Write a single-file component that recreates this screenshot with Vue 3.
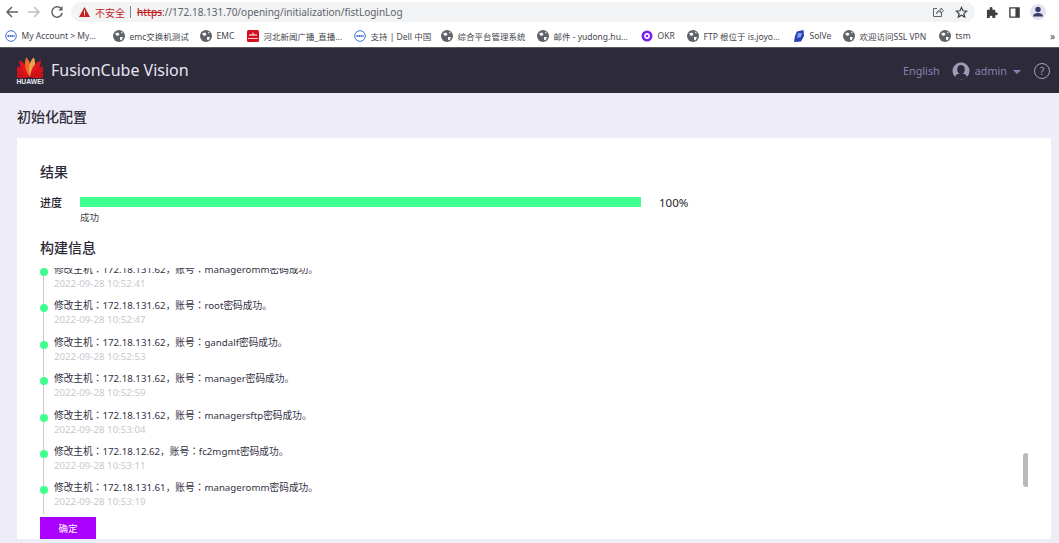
<script setup>
const bookmarks = [
  { icon: 'dell', text: 'My Account > My...', w: 108 },
  { icon: 'globe', text: 'emc交换机测试', w: 87 },
  { icon: 'globe', text: 'EMC', w: 47 },
  { icon: 'red', text: '河北新闻广播_直播...', w: 107 },
  { icon: 'dell', text: '支持 | Dell 中国', w: 87 },
  { icon: 'globe', text: '综合平台管理系统', w: 96 },
  { icon: 'globe', text: '邮件 - yudong.hu...', w: 104 },
  { icon: 'okr', text: 'OKR', w: 46 },
  { icon: 'globe', text: 'FTP 根位于 is.joyo...', w: 106 },
  { icon: 'solve', text: 'SolVe', w: 50 },
  { icon: 'globe', text: '欢迎访问SSL VPN', w: 96 },
  { icon: 'globe', text: 'tsm', w: 40 }
]
const logs = [
  { text: '修改主机：172.18.131.62，账号：manageromm密码成功。', time: '2022-09-28 10:52:41' },
  { text: '修改主机：172.18.131.62，账号：root密码成功。', time: '2022-09-28 10:52:47' },
  { text: '修改主机：172.18.131.62，账号：gandalf密码成功。', time: '2022-09-28 10:52:53' },
  { text: '修改主机：172.18.131.62，账号：manager密码成功。', time: '2022-09-28 10:52:59' },
  { text: '修改主机：172.18.131.62，账号：managersftp密码成功。', time: '2022-09-28 10:53:04' },
  { text: '修改主机：172.18.12.62，账号：fc2mgmt密码成功。', time: '2022-09-28 10:53:11' },
  { text: '修改主机：172.18.131.61，账号：manageromm密码成功。', time: '2022-09-28 10:53:19' }
]
const petals = [
  { a: -80, c: '#c90f18' }, { a: -56, c: '#d5121c' }, { a: -33, c: '#e0161f' }, { a: -11, c: '#ee6a2a' },
  { a: 11, c: '#f0a24a' }, { a: 33, c: '#e0161f' }, { a: 56, c: '#d5121c' }, { a: 80, c: '#c90f18' }
]
</script>

<template>
  <div class="page">
    <div class="toolbar">
      <svg class="nav" width="14" height="14" viewBox="0 0 14 14"><path d="M13 7H2M7 2 2 7l5 5" fill="none" stroke="#5f6368" stroke-width="1.5"/></svg>
      <svg class="nav" width="14" height="14" viewBox="0 0 14 14"><path d="M1 7h11M7 2l5 5-5 5" fill="none" stroke="#bdc1c6" stroke-width="1.5"/></svg>
      <svg class="nav" width="14" height="14" viewBox="0 0 14 14"><path d="M11.5 4.2A5.2 5.2 0 1 0 12.2 8" fill="none" stroke="#5f6368" stroke-width="1.5"/><path d="M12.6 1v4.4H8.2z" fill="#5f6368"/></svg>
      <div class="omnibox">
        <svg width="11" height="10" viewBox="0 0 11 10"><path d="M5.5 0 11 10H0z" fill="#c5221f"/><path d="M5 3.5h1v3.4H5zM5 7.6h1v1H5z" fill="#fff"/></svg>
        <span class="insecure">不安全</span>
        <span class="sep"></span>
        <span class="url"><span class="scheme">https</span>://172.18.131.70/opening/initialization/fistLoginLog</span>
        <span class="omni-right">
          <svg width="12" height="12" viewBox="0 0 12 12"><path d="M5 2.5H1.5v8h8V7M4.5 7.5C5 5 7 3.800 9 3.800V2l2.500 2.700L9 7.200V5.500c-2 0-3.500.7-4.500 2z" fill="none" stroke="#5f6368"/></svg>
          <svg width="13" height="13" viewBox="0 0 13 13"><path d="m6.500 1.500 1.500 3.300 3.600.4-2.700 2.400.8 3.500-3.200-1.800-3.200 1.800.8-3.500-2.700-2.400 3.600-.4z" fill="none" stroke="#3c4043" stroke-width="1.200"/></svg>
        </span>
      </div>
      <div class="tools">
        <svg width="12" height="12" viewBox="0 0 13 13"><path d="M1 4h3V2.500a1.500 1.500 0 0 1 3 0V4h3v3h1.300a1.500 1.500 0 0 1 0 3H10v3H7v-1a1.500 1.500 0 0 0-3 0v1H1z" fill="#3c4043"/></svg>
        <svg width="11" height="11" viewBox="0 0 12 12"><path d="M1 1h10v10H1z" fill="none" stroke="#3c4043" stroke-width="1.500"/><path d="M7 1h4v10H7z" fill="#3c4043"/></svg>
        <span class="avatar"><svg width="16" height="16" viewBox="0 0 16 16"><circle cx="8" cy="5.500" r="2.700" fill="#3b3a6b"/><path d="M3 12.500c0-2.500 2.500-3.500 5-3.500s5 1 5 3.500z" fill="#3b3a6b"/></svg></span>
        <svg width="3" height="12" viewBox="0 0 3 12"><circle cx="1.500" cy="2" r="1.200" fill="#3c4043"/><circle cx="1.500" cy="6" r="1.200" fill="#3c4043"/><circle cx="1.500" cy="10" r="1.200" fill="#3c4043"/></svg>
      </div>
    </div>

    <div class="bookmarks">
      <span v-for="b in bookmarks" :key="b.text" class="bookmark" :style="{ width: b.w + 'px' }">
        <svg v-if="b.icon === 'globe'" width="12" height="12" viewBox="0 0 12 12"><circle cx="6" cy="6" r="6" fill="#5f6368"/><path d="M2 3.500 5 2.500l1.500 1.500-1 1.500-1.500.5zM7 7h3L8.500 10.500 7 9.500zM8 1.500 10 3 8.500 3.500z" fill="#fff"/></svg>
        <svg v-else-if="b.icon === 'dell'" width="12" height="12" viewBox="0 0 12 12"><circle cx="6" cy="6" r="5.300" fill="#fff" stroke="#3f6fd0"/><path d="M2.500 6h7" stroke="#3f6fd0" stroke-width="1.800" stroke-dasharray="1.500 .5"/></svg>
        <svg v-else-if="b.icon === 'red'" width="12" height="12" viewBox="0 0 12 12"><rect width="12" height="12" rx="1.500" fill="#d40f1e"/><path d="M2 4.500h8v1H2zM5.500 2.500h1v3h-1z" fill="#fff"/><path d="M1 8h10v1H1z" fill="#ffd0d0"/></svg>
        <svg v-else-if="b.icon === 'okr'" width="12" height="12" viewBox="0 0 12 12"><circle cx="6" cy="6" r="4.200" fill="#fff" stroke="#7b22e8" stroke-width="2.600"/><circle cx="6" cy="6" r="1.300" fill="#7b22e8"/></svg>
        <svg v-else width="12" height="12" viewBox="0 0 12 12"><path d="M4 1.500 10.500 0 11 6 8 11.500 1 12l1-6z" fill="#2b3fb0"/><path d="M5 3 9 3 8 7 4 8z" fill="#7fa0e8"/></svg>
        <span>{{ b.text }}</span>
      </span>
      <span class="more">»</span>
    </div>

    <header class="app-header">
      <div class="logo">
        <svg width="26" height="22" viewBox="0 0 26 22">
          <path v-for="p in petals" :key="p.a" d="M13 21C9.500 15 9 7 13 1c4 6 3.500 14 0 20z" :fill="p.c" :transform="`rotate(${p.a} 13 21)`"/>
        </svg>
        <span class="huawei">HUAWEI</span>
      </div>
      <span class="product">FusionCube Vision</span>
      <div class="header-right">
        <span>English</span>
        <svg class="user" width="18" height="18" viewBox="0 0 18 18"><circle cx="9" cy="9" r="8.500" fill="#9d9bb8"/><ellipse cx="9" cy="7.500" rx="3.800" ry="4.500" fill="#2d2a3a"/><path d="M3 15c1-3 3.500-3.500 6-3.500s5 .5 6 3.500c-3 3-9 3-12 0z" fill="#2d2a3a"/></svg>
        <span>admin</span>
        <span class="caret"></span>
        <span class="help">?</span>
      </div>
    </header>

    <main class="content">
      <h1 class="page-title">初始化配置</h1>
      <section class="card">
        <h2 class="section-title">结果</h2>
        <div class="progress-row">
          <span class="progress-label">进度</span>
          <div class="track"></div>
          <span class="percent">100%</span>
        </div>
        <div class="status">成功</div>
        <h2 class="section-title build">构建信息</h2>
        <div class="log-window">
          <ul class="log-list">
            <li v-for="l in logs" :key="l.time" class="log-item">
              <span class="dot"></span>
              <div class="log-text">{{ l.text }}</div>
              <div class="log-time">{{ l.time }}</div>
            </li>
          </ul>
          <span class="thumb"></span>
        </div>
        <button class="confirm" type="button">确定</button>
      </section>
    </main>
  </div>
</template>

<style>
html, body { margin: 0; overflow: hidden; background: #eeedf7; }
</style>

<style scoped>
.page {
  width: 1059px;
  height: 543px;
  overflow: hidden;
  display: flex;
  flex-direction: column;
  background: #eeedf7;
  font-family: "Noto Sans", "Noto Sans CJK SC", sans-serif;
}
.toolbar {
  height: 24px;
  flex: none;
  background: #fff;
  display: flex;
  align-items: center;
  padding-left: 5px;
}
.nav { flex: none; margin-right: 8px; }
.nav:nth-child(2) { margin-right: 9px; }
.nav:nth-child(3) { margin-right: 7px; }
.omnibox {
  width: 904px;
  height: 20px;
  border-radius: 10px;
  background: #f1f3f4;
  display: flex;
  align-items: center;
  padding-left: 8px;
  box-sizing: border-box;
  flex: none;
}
.insecure { color: #c5221f; font-size: 10px; margin-left: 5px; }
.sep { width: 1px; height: 12px; background: #80868b; margin: 0 6px 0 5px; }
.url { color: #5f6368; font-size: 10px; }
.scheme { color: #c5221f; text-decoration: line-through; font-weight: 500; }
.omni-right { margin-left: auto; display: flex; gap: 11px; align-items: center; padding-right: 7px; }
.tools { display: flex; align-items: center; margin-left: 11px; gap: 11px; }
.avatar {
  width: 16px; height: 16px; border-radius: 50%;
  background: #e4e3f2; display: flex; margin: 0 2px 0 -1px;
}
.bookmarks {
  height: 23px;
  flex: none;
  background: #fff;
  display: flex;
  align-items: center;
  padding-left: 5px;
  position: relative;
  font-size: 8.500px;
  color: #46464e;
  border-bottom: 1px solid #5b5a63;
}
.bookmark { display: flex; align-items: center; gap: 4.500px; white-space: nowrap; flex: none; }
.bookmark svg { flex: none; }
.more { position: absolute; right: 4px; top: 5px; font-size: 10px; }
.app-header {
  height: 45px;
  flex: none;
  background: #2d2a3a;
  display: flex;
  align-items: center;
  padding-left: 17px;
  color: #e6e6f2;
}
.logo { display: flex; flex-direction: column; align-items: center; width: 26px; margin-top: 1px; }
.huawei { font-size: 6.800px; font-weight: 700; line-height: 8px; color: #e8e8ee; font-family: "Liberation Sans", sans-serif; }
.product { font-size: 16px; margin-left: 8px; margin-bottom: 1px; }
.header-right {
  margin-left: auto;
  display: flex;
  align-items: center;
  font-size: 10.800px;
  color: #8583b0;
  padding-right: 9px;
}
.user { margin: 0 5px 0 12px; }
.caret {
  width: 0; height: 0;
  border-left: 4px solid transparent;
  border-right: 4px solid transparent;
  border-top: 4px solid #8583b0;
  margin: 2px 0 0 6px;
}
.help {
  width: 14px; height: 14px;
  border: 1.200px solid #a3a3b5;
  color: #a3a3b5;
  border-radius: 50%;
  margin-left: 13px;
  display: flex; align-items: center; justify-content: center;
  font-size: 10.500px;
}
.content { flex: 1; padding: 0 8px 4px 17px; display: flex; flex-direction: column; min-height: 0; }
.page-title {
  margin: 0;
  height: 45px;
  line-height: 48px;
  font-size: 14px;
  font-weight: 500;
  color: #33303f;
  flex: none;
}
.card {
  flex: 1;
  min-height: 0;
  background: #fff;
  padding: 0 23px;
  display: flex;
  flex-direction: column;
}
.section-title {
  margin: 0;
  font-size: 14px;
  font-weight: 500;
  color: #2c2a38;
  line-height: 20px;
  padding-top: 24px;
  flex: none;
}
.build { padding-top: 12px; }
.progress-row {
  display: flex;
  align-items: center;
  margin-top: 12px;
  height: 16px;
  flex: none;
}
.progress-label { width: 40px; font-size: 11px; font-weight: 500; color: #1f1d2b; }
.track { width: 561px; height: 10px; background: #3fff8f; }
.percent { margin-left: 18px; font-size: 11.500px; color: #1f1d2b; }
.status { margin: 0 0 0 40px; font-size: 9.500px; line-height: 16px; color: #46434f; flex: none; }
.log-window {
  position: relative;
  height: 249px;
  margin-top: 10px;
  overflow: hidden;
  flex: none;
}
.log-list {
  list-style: none;
  margin: -9px 0 0;
  padding: 0;
  position: relative;
}
.log-item {
  position: relative;
  height: 36.400px;
  padding-left: 14px;
  box-sizing: border-box;
  padding-top: 4px;
}
.log-item::before {
  content: "";
  position: absolute;
  left: 3px;
  top: 0;
  bottom: 0;
  width: 1px;
  background: #c9c9ce;
}
.dot {
  position: absolute;
  left: 0;
  top: 9px;
  width: 8px;
  height: 8px;
  border-radius: 50%;
  background: #3fff8f;
}
.log-text {
  font-family: "Noto Sans", "Noto Sans CJK JP", sans-serif;
  font-size: 9.700px;
  line-height: 14px;
  color: #33313f;
  white-space: nowrap;
}
.log-time { font-size: 9.700px; line-height: 14px; color: #c8c8ce; white-space: nowrap; }
.thumb {
  position: absolute;
  left: 983px;
  top: 185px;
  width: 6px;
  height: 34px;
  border-radius: 3px;
  background: #b9b9b9;
}
.confirm {
  width: 56px;
  height: 22px;
  padding: 0;
  border: none;
  background: #aa00ff;
  color: #fff;
  font: inherit;
  font-size: 9.500px;
  flex: none;
}
</style>
